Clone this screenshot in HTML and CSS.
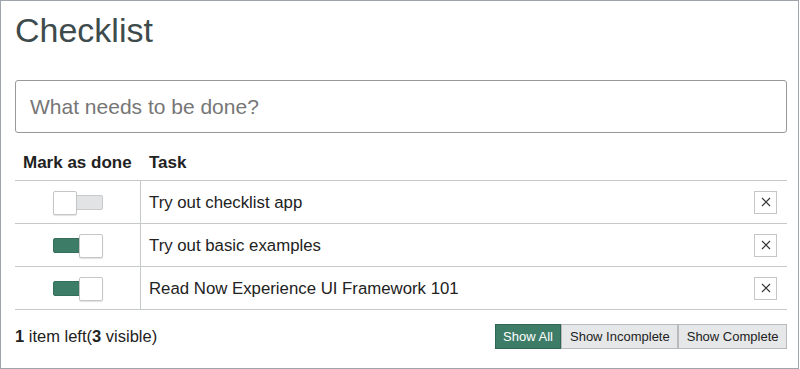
FILE: index.html
```html
<!DOCTYPE html>
<html lang="en">
<head>
<meta charset="utf-8">
<title>Checklist</title>
<link rel="stylesheet" href="styles.css">
</head>
<body>
<div class="frame">
  <h1 class="title">Checklist</h1>
  <input class="new-todo" type="text" placeholder="What needs to be done?">
  <div class="list">
    <div class="row head">
      <div class="c1">Mark as done</div>
      <div class="c2">Task</div>
    </div>
    <div class="row item">
      <div class="c1"><span class="toggle"><span class="track"></span><span class="knob"></span></span></div>
      <div class="c2"><span class="label">Try out checklist app</span>
        <button class="del" aria-label="Delete"><svg width="10" height="10" viewBox="0 0 10 10"><path d="M1 1L9 9M9 1L1 9" stroke="#333" stroke-width="1.1" fill="none"/></svg></button></div>
    </div>
    <div class="row item">
      <div class="c1"><span class="toggle on"><span class="track"></span><span class="knob"></span></span></div>
      <div class="c2"><span class="label">Try out basic examples</span>
        <button class="del" aria-label="Delete"><svg width="10" height="10" viewBox="0 0 10 10"><path d="M1 1L9 9M9 1L1 9" stroke="#333" stroke-width="1.1" fill="none"/></svg></button></div>
    </div>
    <div class="row item">
      <div class="c1"><span class="toggle on"><span class="track"></span><span class="knob"></span></span></div>
      <div class="c2"><span class="label">Read Now Experience UI Framework 101</span>
        <button class="del" aria-label="Delete"><svg width="10" height="10" viewBox="0 0 10 10"><path d="M1 1L9 9M9 1L1 9" stroke="#333" stroke-width="1.1" fill="none"/></svg></button></div>
    </div>
  </div>
  <div class="footer">
    <div class="count"><b>1</b> item left(<b>3</b> visible)</div>
    <div class="filters">
      <button class="filter active">Show All</button><button class="filter">Show Incomplete</button><button class="filter">Show Complete</button>
    </div>
  </div>
</div>
</body>
</html>
```

FILE: styles.css
```css
html, body {
  margin: 0;
  padding: 0;
  background: #ffffff;
}
body {
  font-family: "Liberation Sans", Arial, sans-serif;
  color: #222;
}
.frame {
  box-sizing: border-box;
  width: 799px;
  height: 369px;
  border: 1px solid #9ea4a9;
  padding: 9px 11px 0 14px;
  overflow: hidden;
}
.title {
  margin: 0;
  font-size: 34px;
  line-height: 40px;
  font-weight: 400;
  color: #3e4b4c;
}
.new-todo {
  display: block;
  box-sizing: border-box;
  width: 100%;
  height: 53px;
  margin: 30px 0 0;
  padding: 0 14px;
  border: 1px solid #999;
  border-radius: 3px;
  font-family: "Liberation Sans", Arial, sans-serif;
  font-size: 21px;
  color: #222;
  outline: none;
}
.new-todo::placeholder {
  color: #767676;
}
.list {
  margin-top: 12px;
}
.row {
  display: grid;
  grid-template-columns: 126px 1fr;
  border-bottom: 1px solid #c6c9ca;
}
.head {
  font-weight: 700;
  font-size: 17px;
  line-height: 20px;
}
.head .c1, .head .c2 {
  padding: 8px 8px 7px;
}
.item {
  height: 43px;
  box-sizing: border-box;
  font-size: 16.8px;
}
.item .c1 {
  box-sizing: border-box;
  border-right: 1px solid #c6c9ca;
  display: flex;
  align-items: center;
  justify-content: center;
}
.item .c2 {
  display: flex;
  align-items: center;
  justify-content: space-between;
  padding: 0 10px 0 8px;
}
.label {
  padding-top: 2px;
}
.toggle {
  position: relative;
  display: inline-block;
  width: 50px;
  height: 24px;
  margin-top: 1px;
}
.track {
  position: absolute;
  left: 0;
  right: 0;
  top: 4px;
  height: 15px;
  box-sizing: border-box;
  background: #e2e3e5;
  border: 1px solid #c9cacc;
  border-radius: 2px;
}
.toggle.on .track {
  background: #3d7c67;
  border-color: #356e5b;
}
.knob {
  position: absolute;
  top: 0;
  left: 0;
  width: 24px;
  height: 24px;
  box-sizing: border-box;
  background: #fff;
  border: 1px solid #c4c6c8;
  border-radius: 2px;
  box-shadow: 0 1px 1px rgba(0,0,0,0.12);
}
.toggle.on .knob {
  left: auto;
  right: 0;
}
.del {
  box-sizing: border-box;
  width: 23px;
  height: 23px;
  padding: 0;
  margin: 0;
  border: 1px solid #c3c6c7;
  background: #fff;
  display: flex;
  align-items: center;
  justify-content: center;
}
.footer {
  display: flex;
  align-items: center;
  justify-content: space-between;
  margin-top: 14px;
}
.count {
  font-size: 16.5px;
  color: #222;
}
.filters {
  display: flex;
}
.filter {
  box-sizing: border-box;
  height: 25px;
  margin: 0;
  padding: 0 7.5px;
  font-family: "Liberation Sans", Arial, sans-serif;
  font-size: 13px;
  color: #222;
  background: #e6e7e8;
  border: 1px solid #b8babb;
  border-radius: 0;
}
.filter.active {
  background: #3d7c67;
  border-color: #2f6553;
  color: #fff;
}
```
